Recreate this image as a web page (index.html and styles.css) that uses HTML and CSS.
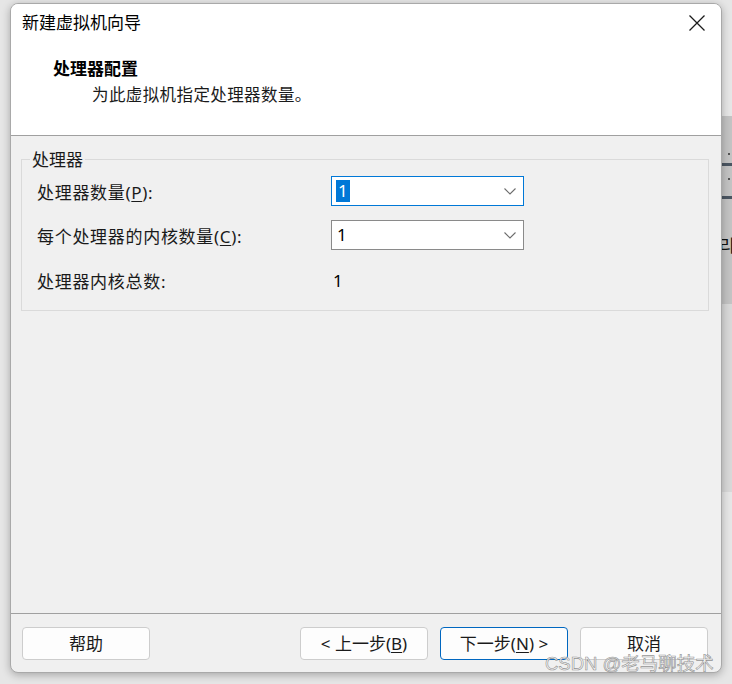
FILE: index.html
```html
<!DOCTYPE html>
<html lang="zh-CN">
<head>
<meta charset="utf-8">
<title>新建虚拟机向导</title>
<link rel="stylesheet" href="styles.css">
</head>
<body>
<div class="desktop">
  <div class="bg-panel">
    <div class="bg-dot bg-dot1"></div>
    <div class="bg-bar bg-bar1"></div>
    <div class="bg-dot bg-dot2"></div>
    <div class="bg-bar bg-bar2"></div>
    <div class="bg-char">리</div>
  </div>
  <div class="bg-lower"></div>

  <div class="window">
    <div class="header">
      <div class="titlebar">
        <span class="title">新建虚拟机向导</span>
        <svg class="close" width="16" height="16" viewBox="0 0 16 16"><path d="M0.5 0.5 L15.5 15.5 M15.5 0.5 L0.5 15.5" stroke="#1b1b1b" stroke-width="1.3" fill="none"/></svg>
      </div>
      <div class="heading">处理器配置</div>
      <div class="subheading">为此虚拟机指定处理器数量。</div>
    </div>

    <div class="content">
      <div class="group">
        <div class="legend">处理器</div>
        <div class="grid">
          <div class="label">处理器数量(<u>P</u>):</div>
          <div class="combo combo-focus">
            <span class="sel">1</span>
            <svg class="chev" width="12" height="7" viewBox="0 0 12 7"><path d="M0.5 0.5 L6 6 L11.5 0.5" stroke="#6e6e6e" stroke-width="1.1" fill="none"/></svg>
          </div>
          <div class="label">每个处理器的内核数量(<u>C</u>):</div>
          <div class="combo">
            <span class="val">1</span>
            <svg class="chev" width="12" height="7" viewBox="0 0 12 7"><path d="M0.5 0.5 L6 6 L11.5 0.5" stroke="#6e6e6e" stroke-width="1.1" fill="none"/></svg>
          </div>
          <div class="label">处理器内核总数:</div>
          <div class="total">1</div>
        </div>
      </div>
    </div>

    <div class="footer">
      <button class="btn">帮助</button>
      <div class="btn-group">
        <button class="btn">&lt; 上一步(<u>B</u>)</button>
        <button class="btn btn-default">下一步(<u>N</u>) &gt;</button>
        <button class="btn">取消</button>
      </div>
    </div>
  </div>

  <div class="watermark">CSDN @老马聊技术</div>
</div>
</body>
</html>
```

FILE: styles.css
```css
* { box-sizing: border-box; }

html, body {
  margin: 0;
  padding: 0;
  width: 732px;
  height: 684px;
  overflow: hidden;
}

body {
  background: #e4e4e4;
  font-family: "Noto Sans", "Noto Sans CJK SC", sans-serif;
  color: #111;
}

.desktop {
  position: relative;
  width: 732px;
  height: 684px;
  background: #e6e6e6;
}

/* things behind the window on the right edge */
.bg-panel {
  position: absolute;
  left: 718px;
  top: 116px;
  width: 14px;
  height: 188px;
  background: #c3c3c3;
  overflow: hidden;
}
.bg-bar {
  position: absolute;
  left: 0;
  width: 14px;
  height: 3px;
  background: #4b5662;
}
.bg-bar1 { top: 47px; }
.bg-bar2 { top: 80px; }
.bg-dot {
  position: absolute;
  left: 10px;
  width: 2px;
  height: 2px;
  background: #555;
}
.bg-dot1 { top: 37px; }
.bg-dot2 { top: 62px; }
.bg-char {
  position: absolute;
  left: 1px;
  top: 119px;
  font-family: "Noto Sans CJK KR", sans-serif;
  font-size: 17px;
  line-height: 20px;
  color: #111;
}
.bg-lower {
  position: absolute;
  left: 718px;
  top: 304px;
  width: 14px;
  height: 188px;
  background: #d8d8d8;
}

/* the dialog window */
.window {
  position: absolute;
  left: 10px;
  top: 3px;
  width: 712px;
  height: 670px;
  border: 1px solid #a9a9a9;
  border-radius: 8px;
  background: #f0f0f0;
  box-shadow: 0 2px 9px rgba(0, 0, 0, 0.28);
  overflow: hidden;
  display: flex;
  flex-direction: column;
}

.header {
  height: 132px;
  background: #ffffff;
  border-bottom: 1px solid #a0a0a0;
  flex: none;
}

.titlebar {
  height: 38px;
  display: flex;
  align-items: center;
  justify-content: space-between;
  padding: 0 16px 0 11px;
}
.title {
  font-size: 17px;
  line-height: 24px;
  color: #000;
}
.close { display: block; }

.heading {
  margin: 15px 0 0 42px;
  font-size: 17px;
  line-height: 24px;
  font-weight: 700;
  color: #000;
}
.subheading {
  margin: 2px 0 0 81px;
  font-size: 16.5px;
  line-height: 24px;
  letter-spacing: 0.4px;
  color: #1a1a1a;
}

.content {
  flex: 1;
  padding: 23px 12px 0 10px;
}

.group {
  border: 1px solid #dadada;
  padding: 0 0 14px 15px;
}
.legend {
  display: block;
  width: max-content;
  margin: -11px 0 0 -7px;
  padding: 0 2px;
  background: #f0f0f0;
  font-size: 17px;
  line-height: 22px;
  color: #1a1a1a;
}

.grid {
  margin-top: 5px;
  display: grid;
  grid-template-columns: 294px 193px;
  grid-template-rows: 30px 30px 32px;
  row-gap: 14px;
  align-items: center;
}

.label {
  font-size: 17px;
  line-height: 22px;
  letter-spacing: 0.7px;
  color: #1a1a1a;
  padding-top: 3px;
}
.label u { text-underline-offset: 2px; }

.combo {
  height: 30px;
  border: 1px solid #8a8a8a;
  background: #fff;
  display: flex;
  align-items: center;
  justify-content: space-between;
  padding: 0 7px 0 4px;
}
.combo-focus { border-color: #0078d7; }
.sel {
  background: #0078d7;
  color: #fff;
  font-size: 17px;
  line-height: 22px;
  padding: 0 2px;
}
.val {
  font-size: 17px;
  line-height: 22px;
  padding: 0 1px;
  color: #000;
}
.chev { display: block; margin-top: 1px; }

.total {
  font-size: 17px;
  line-height: 22px;
  padding: 2px 0 0 2px;
  color: #000;
}

.footer {
  height: 59px;
  flex: none;
  border-top: 1px solid #a0a0a0;
  padding: 13px 13px 0 11px;
  display: flex;
  align-items: flex-start;
  justify-content: space-between;
}
.btn-group {
  display: flex;
  gap: 12px;
}
.btn {
  width: 128px;
  height: 33px;
  border: 1px solid #cdcdcd;
  border-radius: 4px;
  background: #fdfdfd;
  font-family: "Noto Sans", "Noto Sans CJK SC", sans-serif;
  font-size: 17px;
  line-height: 22px;
  color: #1a1a1a;
  padding: 0;
  margin: 0;
}
.btn u { text-underline-offset: 2px; }
.btn-default { border-color: #0067c0; }

.watermark {
  position: absolute;
  left: 545px;
  top: 651px;
  font-family: "Liberation Sans", "Noto Sans CJK SC", sans-serif;
  font-size: 18.5px;
  line-height: 26px;
  color: rgba(245, 245, 245, 0.9);
  -webkit-text-stroke: 0.6px rgba(110, 110, 110, 0.75);
  white-space: nowrap;
}
```
